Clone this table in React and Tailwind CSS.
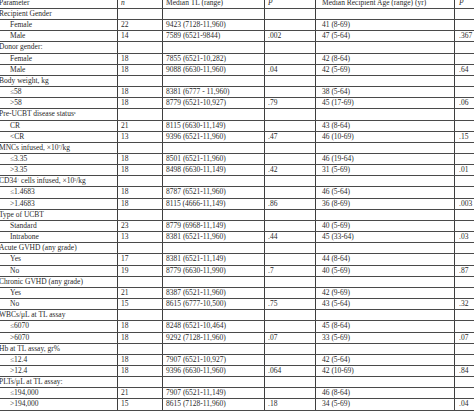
import React from "react";

const rows = [
  { cat: "Recipient Gender" },
  { p: "Female", n: "22", tl: "9423 (7128-11,960)", age: "41 (8-69)" },
  { p: "Male", n: "14", tl: "7589 (6521-9844)", p1: ".002", age: "47 (5-64)", p2: ".367" },
  { cat: "Donor gender:" },
  { p: "Female", n: "18", tl: "7855 (6521-10,282)", age: "42 (8-64)" },
  { p: "Male", n: "18", tl: "9088 (6630-11,960)", p1: ".04", age: "42 (5-69)", p2: ".64" },
  { cat: "Body weight, kg" },
  { p: "≤58", n: "18", tl: "8381 (6777 - 11,960)", age: "38 (5-64)" },
  { p: ">58", n: "18", tl: "8779 (6521-10,927)", p1: ".79", age: "45 (17-69)", p2: ".06" },
  { cat: <>Pre-UCBT disease status<sup className="text-[4px]">a</sup></> },
  { p: "CR", n: "21", tl: "8115 (6630-11,149)", age: "43 (8-64)" },
  { p: "<CR", n: "13", tl: "9396 (6521-11,960)", p1: ".47", age: "46 (10-69)", p2: ".15" },
  { cat: <>MNCs infused, ×10<sup className="text-[4px]">7</sup>/kg</> },
  { p: "≤3.35", n: "18", tl: "8501 (6521-11,960)", age: "46 (19-64)" },
  { p: ">3.35", n: "18", tl: "8498 (6630-11,149)", p1: ".42", age: "31 (5-69)", p2: ".01" },
  { cat: <>CD34<sup className="text-[4px]">+</sup> cells infused, ×10<sup className="text-[4px]">5</sup>/kg</> },
  { p: "≤1.4683", n: "18", tl: "8787 (6521-11,960)", age: "46 (5-64)" },
  { p: ">1.4683", n: "18", tl: "8115 (4666-11,149)", p1: ".86", age: "36 (8-69)", p2: ".003" },
  { cat: "Type of UCBT" },
  { p: "Standard", n: "23", tl: "8779 (6968-11,149)", age: "40 (5-69)" },
  { p: "Intrabone", n: "13", tl: "8381 (6521-11,960)", p1: ".44", age: "45 (33-64)", p2: ".03" },
  { cat: "Acute GVHD (any grade)" },
  { p: "Yes", n: "17", tl: "8381 (6521-11,149)", age: "44 (8-64)" },
  { p: "No", n: "19", tl: "8779 (6630-11,990)", p1: ".7", age: "40 (5-69)", p2: ".87" },
  { cat: "Chronic GVHD (any grade)" },
  { p: "Yes", n: "21", tl: "8387 (6521-11,960)", age: "42 (9-69)" },
  { p: "No", n: "15", tl: "8615 (6777-10,500)", p1: ".75", age: "43 (5-64)", p2: ".32" },
  { cat: "WBCs/μL at TL assay" },
  { p: "≤6070", n: "18", tl: "8248 (6521-10,464)", age: "45 (8-64)" },
  { p: ">6070", n: "18", tl: "9292 (7128-11,960)", p1: ".07", age: "33 (5-69)", p2: ".07" },
  { cat: "Hb at TL assay, gr%" },
  { p: "≤12.4", n: "18", tl: "7907 (6521-10,927)", age: "42 (5-64)" },
  { p: ">12.4", n: "18", tl: "9396 (6630-11,960)", p1: ".064", age: "42 (10-69)", p2: ".84" },
  { cat: "PLTs/μL at TL assay:" },
  { p: "≤194,000", n: "21", tl: "7907 (6521-11,149)", age: "46 (8-64)" },
  { p: ">194,000", n: "15", tl: "8615 (7128-11,960)", p1: ".18", age: "34 (5-69)", p2: ".04" },
];

function Row({ c0, c1, c2, c3, c4, c5, indent }) {
  return (
    <div className="grid grid-cols-[118px_45px_102px_51px_139px_19px] h-[11.17px] border-b border-[#4a4a4a] leading-[10px]">
      <div className={"border-r border-[#3f3f3f] whitespace-nowrap " + (indent ? "pl-[10px]" : "-ml-[1px]")}>{c0}</div>
      <div className="border-r border-[#3f3f3f] pl-[3px] whitespace-nowrap">{c1}</div>
      <div className="border-r border-[#3f3f3f] pl-[3px] whitespace-nowrap">{c2}</div>
      <div className="border-r border-[#3f3f3f] pl-[3px] whitespace-nowrap">{c3}</div>
      <div className="border-r border-[#3f3f3f] pl-[6px] whitespace-nowrap">{c4}</div>
      <div className="pl-[4px] whitespace-nowrap">{c5}</div>
    </div>
  );
}

export default function App() {
  return (
    <div className="w-[474px] h-[412px] overflow-hidden bg-white text-[#2a2a2a] text-[7.5px]" style={{ fontFamily: '"Liberation Serif", "Times New Roman", serif' }}>
      <div className="-mt-[2.2px]">
        <Row c0="Parameter" c1={<i>n</i>} c2="Median TL (range)" c3={<i>P</i>} c4="Median Recipient Age (range) (yr)" c5={<i>P</i>} />
        {rows.map((r, i) =>
          r.cat ? (
            <Row key={i} c0={r.cat} />
          ) : (
            <Row key={i} indent c0={r.p} c1={r.n} c2={r.tl} c3={r.p1} c4={r.age} c5={r.p2} />
          )
        )}
      </div>
    </div>
  );
}
